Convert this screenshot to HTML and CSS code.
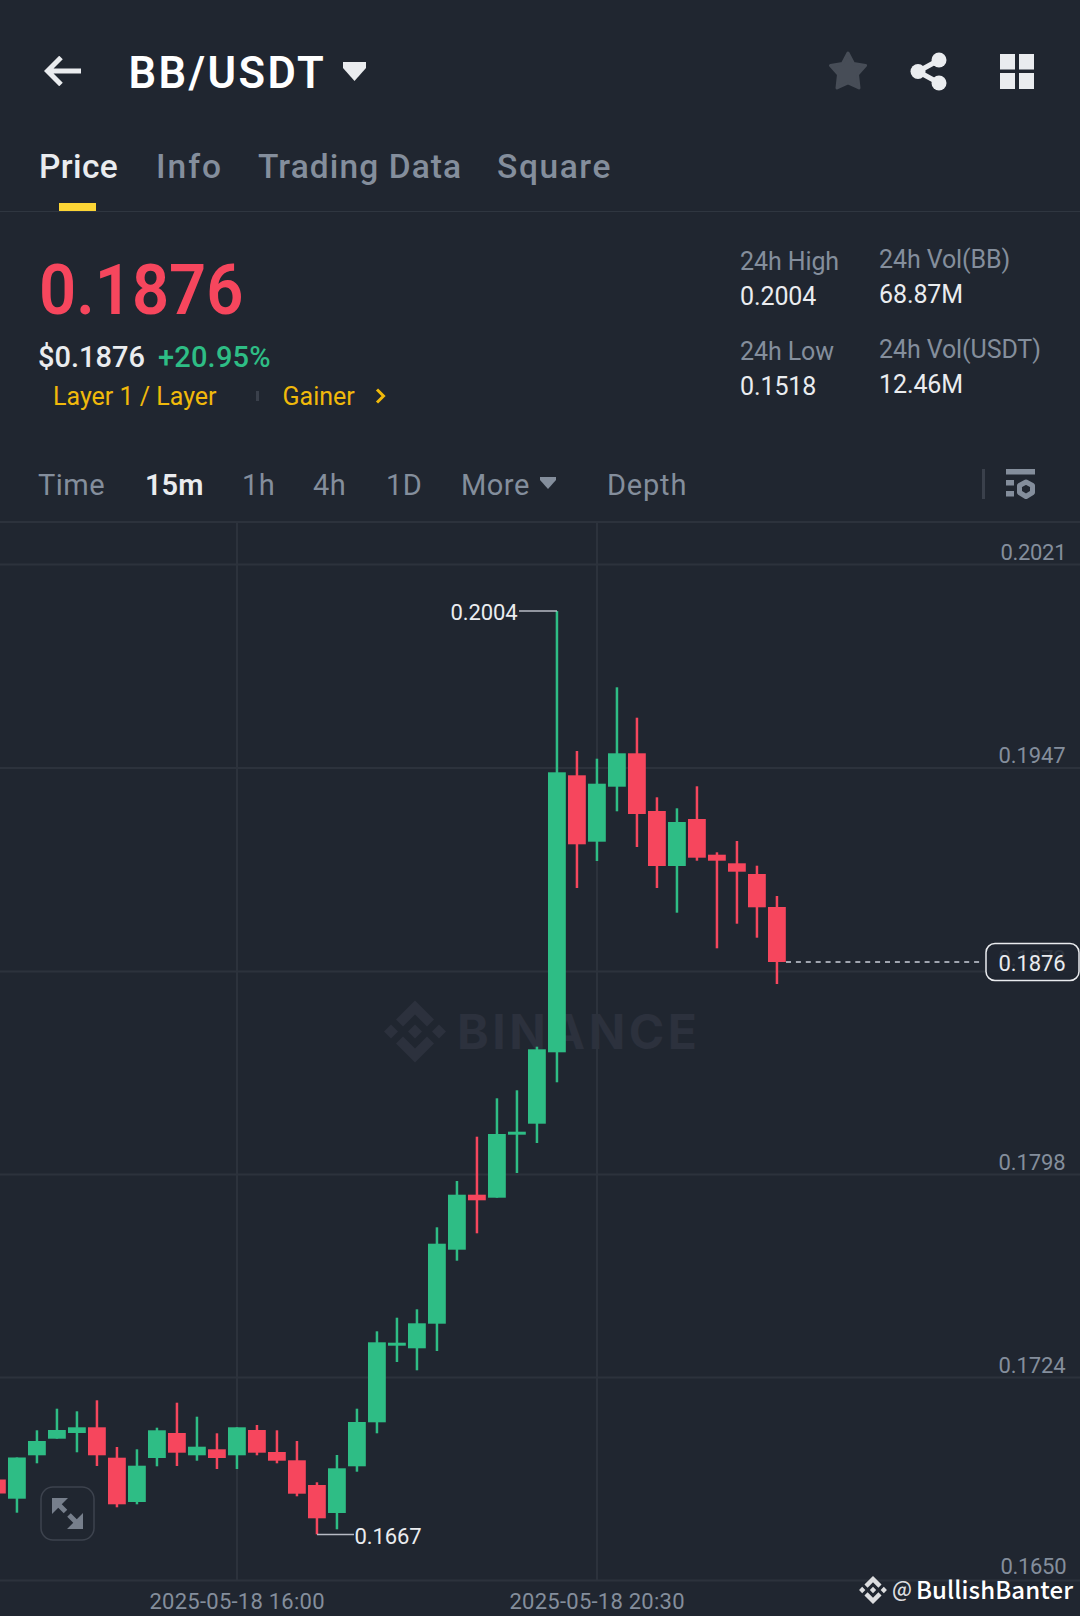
FILE: index.html
```html
<!DOCTYPE html>
<html lang="en">
<head>
    <meta charset="UTF-8">
    <meta name="viewport" content="width=device-width, initial-scale=1.0">
    <title>BB/USDT</title>
    <link rel="stylesheet" href="styles.css">
</head>
<body>

    <header class="topbar">
        <svg class="back" width="38" height="30" viewBox="0 0 38 30"><path d="M17 1.5L3.5 15L17 28.5M4 15H37" fill="none" stroke="#eaecef" stroke-width="5"/></svg>
        <h1>BB/USDT</h1>
        <svg class="pair-caret" width="23" height="19" viewBox="0 0 23 19"><path d="M0 0H23V6L11.500 19L0 6Z" fill="#eaecef"/></svg>
        <div class="actions">
            <svg width="38" height="40" viewBox="0 0 38 40"><path d="M19 2L24.500 12.500L36.500 14.500L28.500 23.500L30 37L19 32L8 37L9.500 23.500L1.500 14.500L13.500 12.500Z" fill="#474d57" stroke="#474d57" stroke-width="3" stroke-linejoin="round"/></svg>
            <svg class="share" width="37" height="39" viewBox="0 0 37 39"><path d="M29 8L8 19.500L29 31" fill="none" stroke="#eaecef" stroke-width="5"/><circle cx="29" cy="8" r="7.500" fill="#eaecef"/><circle cx="8" cy="19.500" r="7.500" fill="#eaecef"/><circle cx="29" cy="31" r="7.500" fill="#eaecef"/></svg>
            <svg class="menu" width="34" height="35" viewBox="0 0 34 35"><path d="M0 0H15V15.500H0ZM19 0H34V15.500H19ZM0 19H15V35H0ZM19 19H34V35H19Z" fill="#eaecef"/></svg>
        </div>
    </header>

    <nav class="tabs">
        <span class="tab t-price active">Price</span>
        <span class="tab t-info">Info</span>
        <span class="tab t-data">Trading Data</span>
        <span class="tab t-square">Square</span>
    </nav>

    <section class="summary">
        <div class="quote">
            <div class="last-price">0.1876</div>
            <div class="fiat"><span class="usd">$0.1876</span><span class="change">+20.95%</span></div>
            <div class="tags">
                <span class="tag-layer">Layer 1 / Layer</span>
                <i class="tag-sep"></i>
                <span class="tag-gainer">Gainer</span>
                <svg width="11" height="16" viewBox="0 0 11 16"><path d="M2 1.500L8.500 8L2 14.500" fill="none" stroke="#f0b90b" stroke-width="3"/></svg>
            </div>
        </div>
        <div class="stats">
            <dl class="stats-price">
                <dt>24h High</dt><dd>0.2004</dd>
                <dt>24h Low</dt><dd>0.1518</dd>
            </dl>
            <dl class="stats-volume">
                <dt>24h Vol(BB)</dt><dd>68.87M</dd>
                <dt>24h Vol(USDT)</dt><dd>12.46M</dd>
            </dl>
        </div>
    </section>

    <nav class="intervals">
        <span class="i-time">Time</span>
        <span class="i-15m selected">15m</span>
        <span class="i-1h">1h</span>
        <span class="i-4h">4h</span>
        <span class="i-1d">1D</span>
        <span class="i-more">More</span>
        <svg class="more-caret" width="16" height="12" viewBox="0 0 16 12"><path d="M0 0H16V3L8 12L0 3Z" fill="#848e9c"/></svg>
        <span class="i-depth">Depth</span>
        <i class="settings-sep"></i>
        <svg class="settings" width="29" height="30" viewBox="0 0 29 30"><path d="M0 0H29V5.500H0ZM0 11H8V16.500H0ZM0 22H8V27.500H0Z" fill="#848e9c"/><path d="M20 13L26.500 16.500V23.500L20 27.500L13.500 23.500V16.500Z" fill="none" stroke="#848e9c" stroke-width="5" stroke-linejoin="round"/></svg>
    </nav>

    <svg class="chart" width="1080" height="1095" viewBox="0 521 1080 1095">
        <g class="watermark">
            <g transform="translate(415 1031.500)">
                <path d="M0-31L19-12L12-5L0-17L-12-5L-19-12Z"/>
                <path d="M0 31L19 12L12 5L0 17L-12 5L-19 12Z"/>
                <path d="M0-7L7 0L0 7L-7 0ZM-24-7L-17 0L-24 7L-31 0ZM24-7L31 0L24 7L17 0Z"/>
            </g>
            <text x="457" y="1049" textLength="240">BINANCE</text>
        </g>
        <g class="grid">
            <path d="M0 522H1080M0 564.500H1080M0 768H1080M0 971.500H1080M0 1174.500H1080M0 1377.500H1080M0 1580.500H1080"/>
            <path d="M237 522V1580M597 522V1580"/>
        </g>
        <g id="candles"></g>
        <path class="leader" d="M519 611H557M317 1534.500H354"/>
        <path class="last-line" d="M786 962H984"/>
        <g class="marks">
            <text x="450.500" y="620" textLength="67">0.2004</text>
            <text x="354.500" y="1544" textLength="67">0.1667</text>
        </g>
        <g class="axis">
            <text x="1000.500" y="560" textLength="66">0.2021</text>
            <text x="998.500" y="763" textLength="67">0.1947</text>
            <text x="998.500" y="966" textLength="67">0.1872</text>
            <text x="998.500" y="1170" textLength="67">0.1798</text>
            <text x="998.500" y="1373" textLength="67">0.1724</text>
            <text x="1000.500" y="1574" textLength="66">0.1650</text>
            <text x="149.500" y="1609" textLength="175">2025-05-18 16:00</text>
            <text x="509.500" y="1609" textLength="175">2025-05-18 20:30</text>
        </g>
        <rect class="last-box" x="986" y="943.500" width="93" height="37" rx="9"/>
        <text class="last-text" x="998.500" y="970.500" textLength="67">0.1876</text>
        <g class="expand">
            <rect x="41" y="1487" width="53" height="53" rx="12"/>
            <path class="head" d="M52 1498H68L52 1514ZM83 1529H67L83 1513Z"/>
            <path class="shaft" d="M57 1503L65.500 1511.500M69 1515L78 1524"/>
        </g>
        <g class="author">
            <g transform="translate(873 1590) scale(.45)">
                <path d="M0-31L19-12L12-5L0-17L-12-5L-19-12Z"/>
                <path d="M0 31L19 12L12 5L0 17L-12 5L-19 12Z"/>
                <path d="M0-7L7 0L0 7L-7 0ZM-24-7L-17 0L-24 7L-31 0ZM24-7L31 0L24 7L17 0Z"/>
            </g>
            <text class="at" x="892" y="1597" textLength="20" lengthAdjust="spacingAndGlyphs">@</text>
            <text x="916" y="1599" textLength="157">BullishBanter</text>
        </g>
    </svg>

    <script>
        // center x, high, body top, body bottom, low, direction
        const candles = [
            [-3, 1479.5, 1479.5, 1493.5, 1493.5, 'down'],
            [17, 1457.5, 1457.5, 1498.7, 1512.7, 'up'],
            [37, 1430.3, 1441, 1455.3, 1463.3, 'up'],
            [57, 1408.7, 1430, 1438.7, 1438.7, 'up'],
            [77, 1411.3, 1427.3, 1433, 1452.3, 'up'],
            [97, 1400.3, 1427.3, 1455.3, 1466, 'down'],
            [117, 1447, 1457.7, 1504.3, 1507.3, 'down'],
            [137, 1449.3, 1465.7, 1502, 1504.3, 'up'],
            [157, 1427.7, 1430.3, 1458, 1466.3, 'up'],
            [177, 1402.7, 1433, 1452.7, 1466, 'down'],
            [197, 1416.7, 1446.7, 1455.3, 1460.7, 'up'],
            [217, 1433.3, 1449.3, 1458, 1469, 'down'],
            [237, 1427.3, 1427.3, 1455.3, 1469, 'up'],
            [257, 1425, 1430, 1452.7, 1455.3, 'down'],
            [277, 1430.3, 1452, 1460.7, 1463.3, 'down'],
            [297, 1441, 1460.3, 1493.7, 1496.3, 'down'],
            [317, 1482.3, 1485, 1518.3, 1534.3, 'down'],
            [337, 1455, 1468.3, 1513, 1529.3, 'up'],
            [357, 1408.7, 1422, 1466.3, 1471.7, 'up'],
            [377, 1331.3, 1342.3, 1422.3, 1433.3, 'up'],
            [397, 1317.7, 1342.7, 1345.7, 1362, 'up'],
            [417, 1309.3, 1323.3, 1348.3, 1370.3, 'up'],
            [437, 1227.3, 1243.7, 1323.7, 1351, 'up'],
            [457, 1181, 1194.7, 1249.7, 1260.7, 'up'],
            [477, 1136.7, 1194.7, 1200.3, 1233.3, 'down'],
            [497, 1098.3, 1134, 1197.7, 1197.7, 'up'],
            [517, 1090.3, 1131.7, 1134.7, 1173, 'up'],
            [537, 1046.7, 1049.3, 1123.7, 1143, 'up'],
            [557, 611, 772.3, 1052.3, 1082.3, 'up'],
            [577, 751, 775.3, 844.3, 888, 'down'],
            [597, 758.7, 783.7, 841.7, 861, 'up'],
            [617, 687.3, 753.3, 786.7, 811.3, 'up'],
            [637, 717.7, 753.3, 814, 847, 'down'],
            [657, 797.3, 811, 866, 888, 'down'],
            [677, 808.3, 822, 866, 912.7, 'up'],
            [697, 786.3, 819, 857.7, 860.7, 'down'],
            [717, 852.3, 854.7, 860.7, 948.3, 'down'],
            [737, 841, 863.3, 871.7, 923.7, 'down'],
            [757, 865.7, 874, 907.3, 937.7, 'down'],
            [777, 896, 907, 962, 984, 'down']
        ];

        document.getElementById('candles').innerHTML = candles.map(([x, high, top, bottom, low, dir]) =>
            `<g class="${dir}"><rect x="${x - 1.3}" y="${high}" width="2.5" height="${low - high}"/>` +
            `<rect x="${x - 9}" y="${top}" width="17.8" height="${bottom - top}"/></g>`
        ).join('');
    </script>

</body>
</html>
```
FILE: styles.css
```css
* {
    box-sizing: border-box;
}

body {
    margin: 0;
    width: 1080px;
    height: 1616px;
    overflow: hidden;
    background: #202630;
    color: #eaecef;
    font-family: Roboto, "Liberation Sans", sans-serif;
}

svg {
    display: block;
    flex: none;
}

span {
    white-space: nowrap;
}

.topbar {
    display: flex;
    align-items: center;
    height: 142px;
    padding: 0 46px 0 44px;
}

.topbar h1 {
    margin: 5px 0 0 46.500px;
    width: 205px;
    font-size: 43.500px;
    font-weight: 600;
    letter-spacing: 2.4px;
    color: #fff;
}

.pair-caret {
    margin-left: 9px;
}

.actions {
    display: flex;
    align-items: center;
    margin-left: auto;
}

.share {
    margin-left: 43px;
}

.menu {
    margin-left: 53px;
}

.tabs {
    display: flex;
    height: 70px;
    padding-left: 39px;
    border-bottom: 1px solid #2f3640;
    font-size: 33.500px;
    font-weight: 500;
    line-height: 49px;
    letter-spacing: 1.1px;
    color: #848e9c;
}

.t-price { width: 117px; letter-spacing: 0.4px; }
.t-info { width: 102px; letter-spacing: 2px; }
.t-data { width: 239px; }
.t-square { letter-spacing: 1.6px; }

.tab.active {
    color: #eaecef;
    background: linear-gradient(#fcd535, #fcd535) 20px 61px / 37px 8px no-repeat;
}

.summary {
    display: flex;
    justify-content: space-between;
    height: 226px;
    padding: 32px 0 0 39px;
}

.last-price {
    height: 90px;
    font-size: 70px;
    font-weight: 600;
    line-height: 92px;
    color: #f6465d;
    transform: scaleX(0.93);
    transform-origin: left;
}

.fiat {
    display: flex;
    gap: 13px;
    height: 46px;
    margin-left: -1px;
    font-size: 29px;
    font-weight: 500;
    line-height: 46px;
}

.change {
    letter-spacing: 0.2px;
    color: #2ebd85;
}

.tags {
    display: flex;
    align-items: center;
    height: 32px;
    padding-left: 14px;
    font-size: 25px;
    color: #f0b90b;
}

.tag-sep {
    width: 3px;
    height: 10px;
    margin: 0 24px 0 39px;
    background: #3a404b;
}

.tags svg {
    margin-left: 20px;
}

.stats {
    display: flex;
    margin-top: -2px;
}

.stats dl {
    margin: 0;
    font-size: 25px;
    letter-spacing: -0.1px;
}

.stats-price {
    width: 139px;
    padding-top: 2px;
}

.stats-volume {
    width: 201px;
}

.stats dt {
    line-height: 35px;
    color: #848e9c;
}

.stats dd {
    margin: 0 0 20px;
    line-height: 35px;
}

.intervals {
    display: flex;
    align-items: center;
    height: 83px;
    padding: 11px 0 0 38px;
    font-size: 29px;
    letter-spacing: 0.5px;
    color: #848e9c;
}

.i-time { width: 107px; }
.i-15m { width: 97px; }
.i-1h { width: 71px; }
.i-4h { width: 73px; }
.i-1d { width: 75px; }
.i-more { width: 79px; }
.i-depth { margin-left: 51px; letter-spacing: 0.8px; }

.intervals .selected {
    color: #eaecef;
    font-weight: 600;
    letter-spacing: 0;
}

.more-caret {
    margin-top: -5px;
}

.settings-sep {
    width: 3px;
    height: 30px;
    margin: -2px 0 0 auto;
    background: #3a404b;
}

.settings {
    margin: -2px 45px 0 21px;
}

.grid path {
    fill: none;
    stroke: #2c323c;
    stroke-width: 2;
}

.watermark {
    fill: #2c313d;
    font: 700 48px Inter, sans-serif;
}

.up {
    fill: #2ebd85;
}

.down {
    fill: #f6465d;
}

.leader {
    fill: none;
    stroke: #b7bac4;
    stroke-width: 1.500;
}

.last-line {
    stroke: #a0a5b0;
    stroke-width: 1.800;
    stroke-dasharray: 5 4.900;
}

.axis,
.marks,
.last-text {
    font-size: 22px;
    fill: #eaecef;
}

.axis {
    fill: #848e9c;
}

.last-box {
    fill: #202630;
    fill-opacity: 0.85;
    stroke: #eaecef;
    stroke-width: 1.500;
}

.expand rect {
    fill: #202630;
    stroke: #3d434e;
    stroke-width: 1.500;
}

.expand .head {
    fill: #777f8c;
}

.expand .shaft {
    stroke: #777f8c;
    stroke-width: 5;
}

.author {
    fill: #fff;
    font: 500 24px "Noto Sans CJK SC", "Noto Sans", sans-serif;
}

.author g,
.author .at {
    fill: #dcdddf;
}

.author .at {
    font-size: 21px;
}
```
